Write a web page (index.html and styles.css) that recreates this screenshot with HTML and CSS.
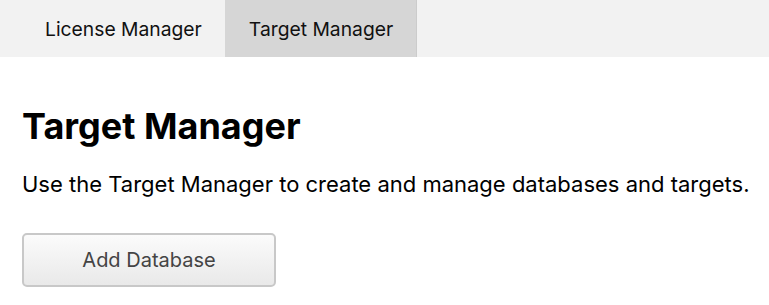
FILE: index.html
```html
<!DOCTYPE html>
<html lang="en">
<head>
<meta charset="utf-8">
<title>Target Manager</title>
<link rel="stylesheet" href="styles.css">
</head>
<body>
<nav class="tabbar">
  <a class="tab" href="#">License Manager</a>
  <a class="tab tab-active" href="#">Target Manager</a>
</nav>
<main class="content">
  <h1 class="title">Target Manager</h1>
  <p class="intro">Use the Target Manager to create and manage databases and targets.</p>
  <button class="btn" type="button">Add Database</button>
</main>
</body>
</html>
```
FILE: styles.css
```css
html, body {
  margin: 0;
  padding: 0;
  background: #ffffff;
  font-family: Inter, "Noto Sans", sans-serif;
  color: #000;
}
.tabbar {
  display: flex;
  height: 57px;
  background: #f2f2f2;
  padding-left: 21px;
}
.tab {
  display: flex;
  align-items: center;
  padding: 0 23px 0 24px;
  font-size: 19.3px;
  color: #111;
  text-decoration: none;
}
.tab-active {
  background: #d6d6d6;
  border-right: 1px solid #cccccc;
}
.content {
  padding: 0 22px;
}
.title {
  margin: 47px 0 0;
  font-size: 36px;
  font-weight: 700;
  line-height: 44px;
}
.intro {
  margin: 22px 0 0;
  font-size: 22px;
  line-height: 28px;
  white-space: nowrap;
}
.btn {
  display: block;
  margin-top: 35px;
  width: 254px;
  height: 54px;
  border: 2px solid #c8c8c8;
  border-radius: 5px;
  background: linear-gradient(#fbfbfb, #e9e9e9);
  font-family: inherit;
  font-size: 20px;
  color: #444;
}
```
